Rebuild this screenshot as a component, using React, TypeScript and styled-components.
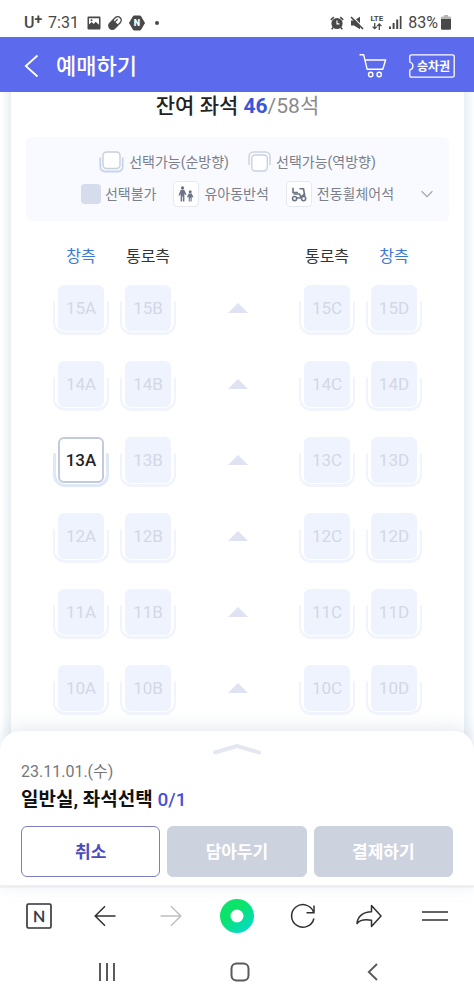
import React from 'react';
import styled, { createGlobalStyle } from 'styled-components';

const GlobalStyle = createGlobalStyle`
  *, *::before, *::after { box-sizing: border-box; }
  body {
    margin: 0;
    background: #fff;
    color: #222;
    font-family: Roboto, "Noto Sans CJK KR", sans-serif;
  }
  button { font-family: inherit; }
  svg { display: block; flex: none; }
  h1, h2, p { margin: 0; }
`;

const Screen = styled.div`
  display: flex;
  flex-direction: column;
  min-height: 100vh;
`;

const IconButton = styled.button<{ $size?: number }>`
  display: flex;
  align-items: center;
  justify-content: center;
  width: ${p => (p.$size ? `${p.$size}px` : 'auto')};
  height: ${p => (p.$size ? `${p.$size}px` : 'auto')};
  padding: 0;
  border: 0;
  background: none;
  color: inherit;
`;

/* ---------- status bar ---------- */

const StatusBar = styled.div`
  display: flex;
  align-items: center;
  justify-content: space-between;
  height: 37px;
  padding: 8px 23px 0 24px;
  color: #484848;
  font-size: 16px;
  line-height: 20px;
`;

const StatusGroup = styled.div`
  display: flex;
  align-items: center;
  gap: 6px;
`;

const Carrier = styled.span`
  display: flex;
  font-weight: 500;
`;

const CarrierPlus = styled.span`
  font-size: 14px;
  line-height: 12px;
  font-weight: 700;
`;

const Clock = styled.span`
  margin-right: 2px;
`;

const Dot = styled.span`
  width: 4px;
  height: 4px;
  margin-left: 4px;
  border-radius: 50%;
  background: #484848;
`;

const Lte = styled.span`
  display: flex;
  flex-direction: column;
  align-items: center;
  font-size: 8px;
  line-height: 8px;
  font-weight: 700;
`;

const BatteryLevel = styled.span`
  display: flex;
  align-items: center;
  gap: 3px;
`;

/* ---------- app header ---------- */

const Header = styled.header`
  display: flex;
  align-items: center;
  height: 55px;
  padding: 3px 19px 0 24px;
  background: #5c6bed;
  color: #fff;
`;

const HeaderTitle = styled.h1`
  flex: 1;
  margin-left: 17px;
  padding-top: 2px;
  font-size: 22px;
  line-height: 30px;
  font-weight: 500;
`;

const TicketButton = styled.button`
  display: grid;
  place-items: center;
  margin-left: 22px;
  padding: 0;
  border: 0;
  background: none;
  color: #fff;
  font-size: 12px;
  line-height: 16px;
  font-weight: 700;

  > * { grid-area: 1 / 1; }
  span { padding: 2px 0 0 3px; }
`;

/* ---------- seat area ---------- */

const Backdrop = styled.main`
  flex: 1;
  display: flex;
  padding: 0 10px 0 11px;
  background:
    linear-gradient(to right, #fff 1px, #e9eff2 11px, transparent 11px) left / 11px 100% no-repeat,
    linear-gradient(to left, #fafcfe 1px, #eaf1f6 9px) right / 10px 100% no-repeat;
`;

const Car = styled.section`
  flex: 1;
  padding: 1px 15px 36px;
  background: #fff;
`;

const Remaining = styled.h2`
  color: #8a8a8e;
  font-size: 21px;
  line-height: 26px;
  font-weight: 400;
  text-align: center;

  b { color: #222; font-weight: 500; }
  strong { color: #3a55d9; font-weight: 700; }
`;

const Legend = styled.div`
  display: grid;
  grid-template-columns: 1fr auto 1fr;
  row-gap: 6px;
  margin-top: 18px;
  padding: 12px 16px 14px;
  border-radius: 6px;
  background: #f8faff;
`;

const LegendRow = styled.div<{ $gap: number }>`
  grid-column: 2;
  display: flex;
  justify-content: center;
  gap: ${p => p.$gap}px;
`;

const LegendItem = styled.span<{ $gap: number }>`
  display: flex;
  align-items: center;
  gap: ${p => p.$gap}px;
  height: 26px;
  color: #7b7f8a;
  font-size: 14px;
  line-height: 20px;
  white-space: nowrap;
`;

const Swatch = styled.span`
  width: 20px;
  height: 20px;
  border-radius: 4px;
  background: #d5dceb;
`;

const SpecialBox = styled.span`
  display: grid;
  place-items: center;
  width: 26px;
  height: 26px;
  border: 1px solid #e6e9f2;
  border-radius: 4px;
  background: #fff;
`;

const LegendToggle = styled(IconButton)`
  justify-self: end;
`;

const SeatGrid = styled.div`
  display: grid;
  grid-template-columns: 56px 56px 1fr 56px 56px;
  column-gap: 11px;
  row-gap: 26px;
  padding: 0 27px;
`;

const ColumnLabels = styled(SeatGrid)`
  margin: 24px 0 16px;
`;

const ColumnLabel = styled.span<{ $window?: boolean }>`
  color: ${p => (p.$window ? '#3a78d8' : '#333')};
  font-size: 16px;
  line-height: 24px;
  text-align: center;
  white-space: nowrap;
`;

const SeatButton = styled.button`
  display: grid;
  justify-items: center;
  width: 56px;
  height: 50px;
  padding: 0;
  border: 0;
  background: none;
  color: #242424;
  font-size: 17px;
  font-weight: 500;

  &::before {
    content: "";
    grid-area: 1 / 1;
    align-self: end;
    width: 56px;
    height: 34px;
    border: 3px solid #dfe8f7;
    border-top: 0;
    border-radius: 2px 2px 12px 12px;
  }

  &:disabled { color: #d3d7e6; font-weight: 400; }
  &:disabled::before { border-width: 0 2px 3px; border-color: #f1f4fc; }
`;

const Cushion = styled.span`
  grid-area: 1 / 1;
  width: 46px;
  height: 46px;
  border: 2px solid #c3cade;
  border-radius: 6px;
  background: #fff;
  line-height: 42px;

  ${SeatButton}:disabled & {
    border-color: #eff3fe;
    background: #eff3fe;
  }
`;

const Direction = styled.svg`
  justify-self: center;
  margin-top: 18px;
`;

/* ---------- booking sheet ---------- */

const Sheet = styled.section`
  position: relative;
  margin-top: -20px;
  padding: 11px 21px 8px;
  border-radius: 20px 20px 0 0;
  background: #fff;
  box-shadow: 0 -2px 18px rgba(150, 168, 200, 0.28);
`;

const SheetHandle = styled(IconButton)`
  margin: 0 auto;
`;

const TripDate = styled.p`
  margin-top: 4px;
  color: #77777b;
  font-size: 16px;
  line-height: 24px;
`;

const TripSummary = styled.p`
  margin: 2px 0 12px;
  color: #111;
  font-size: 19px;
  line-height: 28px;
  font-weight: 700;

  strong { color: #4b4fd6; font-weight: 500; }
`;

const Actions = styled.div`
  display: grid;
  grid-template-columns: repeat(3, 1fr);
  gap: 7px;
`;

const ActionButton = styled.button<{ $outline?: boolean }>`
  height: 51px;
  padding: 0 0 2px;
  border: 1px solid ${p => (p.$outline ? '#7d7ec4' : '#cdd2df')};
  border-radius: 6px;
  background: ${p => (p.$outline ? '#fff' : '#cdd2df')};
  color: ${p => (p.$outline ? '#4a4bbd' : '#fff')};
  font-size: 17px;
  font-weight: 700;
`;

/* ---------- browser and system bars ---------- */

const BrowserBar = styled.nav`
  display: flex;
  align-items: center;
  justify-content: space-between;
  height: 59px;
  padding: 0 22px;
  border-top: 3px solid #f6f6f6;
  background: #fff;
  color: #303035;
`;

const SystemBar = styled.nav`
  display: flex;
  align-items: center;
  justify-content: space-between;
  height: 56px;
  padding: 0 85px 0 90px;
  background: #fff;
  color: #5a5a5a;
`;

/* ---------- icons ---------- */

const PictureIcon = () => (
  <svg width="14" height="14" viewBox="0 0 14 14">
    <path fillRule="evenodd" fill="currentColor" d="M1.5 .5h11a1 1 0 0 1 1 1v11a1 1 0 0 1-1 1h-11a1 1 0 0 1-1-1v-11a1 1 0 0 1 1-1zM2 2.200v6.300l2.600-2.500 2.200 2 1.800-2.200 3.400 3V2.200z" />
    <circle cx="4.500" cy="4.200" r="1" fill="currentColor" />
  </svg>
);

const PillIcon = () => (
  <svg width="16" height="16" viewBox="0 0 16 16">
    <g transform="rotate(-45 8 8)">
      <rect x="0" y="3.800" width="16" height="8.400" rx="4.200" fill="currentColor" />
      <path d="M9 5.200h2.800a2.800 2.800 0 0 1 0 5.600H9z" fill="#fff" />
      <path d="M9 7.200h3.600" stroke="currentColor" strokeWidth="1.200" />
    </g>
  </svg>
);

const HexIcon = () => (
  <svg width="16" height="16" viewBox="0 0 16 16">
    <path d="M4.600 1h6.800L15.500 8l-4.100 7H4.600L.5 8z" fill="currentColor" stroke="currentColor" strokeLinejoin="round" />
    <text x="8" y="11.200" fontSize="9" fontWeight="900" fontFamily="Roboto, sans-serif" fill="#fff" textAnchor="middle">N</text>
  </svg>
);

const AlarmIcon = () => (
  <svg width="14" height="14" viewBox="0 0 14 14" fill="none" stroke="currentColor">
    <circle cx="7" cy="7.500" r="5.600" fill="currentColor" stroke="none" />
    <path d="M.8 3.800 3.800 1.200M10.200 1.200l3 2.600M3 11.500l-1.200 1.700M11 11.500l1.200 1.700" strokeWidth="1.600" />
    <path d="M7 4.500v3.300h2.500" stroke="#fff" strokeWidth="1.200" />
  </svg>
);

const MuteIcon = () => (
  <svg width="14" height="14" viewBox="0 0 14 14">
    <path d="M1 4.500h3L10 .8v12.400L4 9.500H1z" fill="currentColor" />
    <path d="M2.500.5l11 11.500" stroke="#fff" strokeWidth="1.200" />
    <path d="M1 1l12 12" stroke="currentColor" strokeWidth="1.700" />
  </svg>
);

const SignalIcon = () => (
  <svg width="13" height="13" viewBox="0 0 13 13" fill="currentColor">
    <path d="M0 10.500h2V13H0zM3.600 7h2v6h-2zM7.200 3.500h2V13h-2zM10.800 0h1.700v13h-1.700z" />
  </svg>
);

const BatteryIcon = () => (
  <svg width="10" height="15" viewBox="0 0 10 15">
    <path d="M3 0h4v1.500h2a1 1 0 0 1 1 1V5H0V2.500a1 1 0 0 1 1-1h2z" fill="#b5b5b5" />
    <path d="M0 4h10v9.500a1.300 1.300 0 0 1-1.300 1.300H1.300A1.300 1.300 0 0 1 0 13.500z" fill="currentColor" />
  </svg>
);

const BackIcon = () => (
  <svg width="15" height="24" viewBox="0 0 15 24" fill="none" stroke="currentColor" strokeWidth="1.800">
    <path d="M13.500 1.500 1.800 12l11.700 10.500" />
  </svg>
);

const CartIcon = () => (
  <svg width="28" height="26" viewBox="0 0 28 26" fill="none" stroke="currentColor" strokeWidth="1.400" strokeLinejoin="round">
    <path d="M.5 1.800h4.200l3.400 14.400h15.700L26.600 7H6" />
    <circle cx="11.700" cy="21.500" r="2.200" />
    <circle cx="20.200" cy="21.500" r="2.200" />
  </svg>
);

const TicketOutline = () => (
  <svg width="46" height="24" viewBox="0 0 46 24" fill="none" stroke="currentColor" strokeWidth="1.300">
    <path d="M2.500.8h41a1.700 1.700 0 0 1 1.700 1.700v19a1.700 1.700 0 0 1-1.700 1.700h-41A1.700 1.700 0 0 1 .8 21.500V16c4.200-1.200 4.200-6.800 0-8V2.500A1.700 1.700 0 0 1 2.500.8z" />
  </svg>
);

const ForwardSeatIcon = () => (
  <svg width="25" height="22" viewBox="0 0 25 22" fill="none">
    <path d="M1.300 6.500V16a4.500 4.500 0 0 0 4.500 4.500h13.400a4.500 4.500 0 0 0 4.500-4.500V6.500" stroke="#c5d5ee" strokeWidth="1.800" />
    <rect x="4" y="1" width="17" height="16.500" rx="3.500" fill="#fff" stroke="#c9cedb" strokeWidth="1.400" />
  </svg>
);

const BackwardSeatIcon = () => (
  <svg width="23" height="22" viewBox="0 0 23 22" fill="none">
    <path d="M1 14V5.500A4.500 4.500 0 0 1 5.500 1h12A4.500 4.500 0 0 1 22 5.500V14" stroke="#cdd4e2" strokeWidth="1.500" />
    <rect x="3.800" y="4" width="15.500" height="16" rx="3.500" fill="#fff" stroke="#c9d0e2" strokeWidth="1.400" />
  </svg>
);

const FamilyIcon = () => (
  <svg width="16" height="16" viewBox="0 0 16 16" fill="#6c7288">
    <circle cx="4.500" cy="2" r="1.700" />
    <path d="M2.600 4h3.800L8.400 8.600l-1 .5L6.400 7.500V15.500H4.900V10.500h-.8v5H2.600V7.500L1.600 9.700.5 9.200z" />
    <circle cx="12.200" cy="5.800" r="1.500" />
    <path d="M10.800 7.600h2.800L15.500 11l-.9.600-.9-1.200v5.100h-1.100v-3.200h-.8v3.200h-1.100v-5.100l-.9 1.200L8.900 11z" />
  </svg>
);

const ScooterIcon = () => (
  <svg width="16" height="15" viewBox="0 0 16 15" fill="none" stroke="#6c7288">
    <path d="M2 .8v4.700h5M8.500 1.800h4l1.300 7.200" strokeWidth="1.600" />
    <path d="M2.500 7h6l1.300 3 3.500-2.500" strokeWidth="1.600" />
    <circle cx="3.600" cy="11.600" r="2.100" strokeWidth="1.500" />
    <circle cx="12.600" cy="11.600" r="2.100" strokeWidth="1.500" />
    <path d="M5.500 11h5" strokeWidth="1.500" />
  </svg>
);

const ChevronDownIcon = () => (
  <svg width="12" height="8" viewBox="0 0 12 8" fill="none" stroke="#a3a8b3" strokeWidth="1.300">
    <path d="M.6 1.200 6 6.600l5.400-5.400" />
  </svg>
);

const HandleIcon = () => (
  <svg width="50" height="14" viewBox="0 0 50 14" fill="none" stroke="#e3e7f1" strokeWidth="4" strokeLinecap="round" strokeLinejoin="round">
    <path d="M3 10.500 25 4l22 6.500" />
  </svg>
);

const NaverIcon = () => (
  <svg width="26" height="26" viewBox="0 0 26 26">
    <rect x="1" y="1" width="24" height="24" rx="1.500" fill="none" stroke="currentColor" strokeWidth="1.600" />
    <text x="13" y="18.500" fontSize="16" fontWeight="400" fontFamily="Lato, sans-serif" fill="currentColor" stroke="currentColor" strokeWidth="0.400" textAnchor="middle">N</text>
  </svg>
);

const ArrowIcon = ({ flip = false }: { flip?: boolean }) => (
  <svg width="22" height="22" viewBox="0 0 22 22" fill="none" stroke={flip ? '#c0c0c0' : 'currentColor'} strokeWidth="1.500">
    <path d={flip ? 'M.5 11h20M11 1.200l9.800 9.800-9.800 9.800' : 'M21.500 11h-20M11 1.200 1.200 11l9.800 9.800'} />
  </svg>
);

const GreenDotIcon = () => (
  <svg width="34" height="34" viewBox="0 0 34 34">
    <defs>
      <linearGradient id="green" x1="0.200" y1="0.100" x2="0.800" y2="0.900">
        <stop offset="0.350" stopColor="#0be36a" />
        <stop offset="1" stopColor="#04dcc4" />
      </linearGradient>
    </defs>
    <circle cx="17" cy="17" r="17" fill="url(#green)" />
    <circle cx="17" cy="17" r="6.500" fill="#fff" />
  </svg>
);

const ReloadIcon = () => (
  <svg width="26" height="26" viewBox="0 0 26 26" fill="none" stroke="currentColor" strokeWidth="1.500">
    <path d="M24 2.500V9.800H16.500M23.600 9.300A11.300 11.300 0 1 0 23.900 15.500" />
  </svg>
);

const ShareIcon = () => (
  <svg width="26" height="24" viewBox="0 0 26 24" fill="none" stroke="currentColor" strokeWidth="1.500" strokeLinejoin="round">
    <path d="M15.500 1.500 25 12l-9.500 10.500V16.300C9 15.200 4 15.800 1 19.500 1.500 12.500 7 8 15.500 7.800z" />
  </svg>
);

const MenuIcon = () => (
  <svg width="26" height="12" viewBox="0 0 26 12" stroke="currentColor" strokeWidth="1.600">
    <path d="M0 2h26M0 10h26" />
  </svg>
);

const RecentsIcon = () => (
  <svg width="18" height="18" viewBox="0 0 18 18" stroke="currentColor" strokeWidth="2">
    <path d="M2 0v18M9 0v18M16 0v18" />
  </svg>
);

const HomeIcon = () => (
  <svg width="20" height="20" viewBox="0 0 20 20" fill="none" stroke="currentColor" strokeWidth="2">
    <rect x="1.500" y="1.500" width="17" height="17" rx="5" />
  </svg>
);

const SystemBackIcon = () => (
  <svg width="11" height="18" viewBox="0 0 11 18" fill="none" stroke="currentColor" strokeWidth="1.900">
    <path d="M10 1 1.800 9l8.200 8" />
  </svg>
);

/* ---------- page ---------- */

const ROWS = [15, 14, 13, 12, 11, 10];
const AVAILABLE = new Set(['13A']);

const Seat = ({ id }: { id: string }) => (
  <SeatButton type="button" disabled={!AVAILABLE.has(id)}>
    <Cushion>{id}</Cushion>
  </SeatButton>
);

export default function App() {
  return (
    <Screen>
      <GlobalStyle />
      <StatusBar>
        <StatusGroup>
          <Carrier>U<CarrierPlus>+</CarrierPlus></Carrier>
          <Clock>7:31</Clock>
          <PictureIcon />
          <PillIcon />
          <HexIcon />
          <Dot />
        </StatusGroup>
        <StatusGroup>
          <AlarmIcon />
          <MuteIcon />
          <Lte>
            LTE
            <svg width="10" height="7" viewBox="0 0 10 7" fill="none" stroke="currentColor" strokeWidth="1.300">
              <path d="M2.700 0v5.500M.6 3.600l2.100 2.100 2.100-2.100M7.300 7V1.200M5.200 3.100 7.300 1l2.100 2.100" />
            </svg>
          </Lte>
          <SignalIcon />
          <BatteryLevel>83%<BatteryIcon /></BatteryLevel>
        </StatusGroup>
      </StatusBar>

      <Header>
        <IconButton type="button" aria-label="뒤로"><BackIcon /></IconButton>
        <HeaderTitle>예매하기</HeaderTitle>
        <IconButton type="button" aria-label="장바구니"><CartIcon /></IconButton>
        <TicketButton type="button">
          <TicketOutline />
          <span>승차권</span>
        </TicketButton>
      </Header>

      <Backdrop>
        <Car>
          <Remaining><b>잔여 좌석</b> <strong>46</strong>/58석</Remaining>

          <Legend>
            <LegendRow $gap={19}>
              <LegendItem $gap={5}><ForwardSeatIcon />선택가능(순방향)</LegendItem>
              <LegendItem $gap={5}><BackwardSeatIcon />선택가능(역방향)</LegendItem>
            </LegendRow>
            <LegendRow $gap={17}>
              <LegendItem $gap={4}><Swatch />선택불가</LegendItem>
              <LegendItem $gap={5}><SpecialBox><FamilyIcon /></SpecialBox>유아동반석</LegendItem>
              <LegendItem $gap={5}><SpecialBox><ScooterIcon /></SpecialBox>전동휠체어석</LegendItem>
            </LegendRow>
            <LegendToggle type="button" aria-label="범례 펼치기"><ChevronDownIcon /></LegendToggle>
          </Legend>

          <ColumnLabels>
            <ColumnLabel $window>창측</ColumnLabel>
            <ColumnLabel>통로측</ColumnLabel>
            <span />
            <ColumnLabel>통로측</ColumnLabel>
            <ColumnLabel $window>창측</ColumnLabel>
          </ColumnLabels>

          <SeatGrid>
            {ROWS.map(row => (
              <React.Fragment key={row}>
                <Seat id={`${row}A`} />
                <Seat id={`${row}B`} />
                <Direction width="20" height="10" viewBox="0 0 20 10">
                  <path d="M10 0 20 10H0z" fill="#dfe2f0" />
                </Direction>
                <Seat id={`${row}C`} />
                <Seat id={`${row}D`} />
              </React.Fragment>
            ))}
          </SeatGrid>
        </Car>
      </Backdrop>

      <Sheet>
        <SheetHandle type="button" aria-label="펼치기"><HandleIcon /></SheetHandle>
        <TripDate>23.11.01.(수)</TripDate>
        <TripSummary>일반실, 좌석선택 <strong>0/1</strong></TripSummary>
        <Actions>
          <ActionButton type="button" $outline>취소</ActionButton>
          <ActionButton type="button" disabled>담아두기</ActionButton>
          <ActionButton type="button" disabled>결제하기</ActionButton>
        </Actions>
      </Sheet>

      <BrowserBar>
        <IconButton type="button" $size={34} aria-label="네이버 홈"><NaverIcon /></IconButton>
        <IconButton type="button" $size={34} aria-label="이전"><ArrowIcon /></IconButton>
        <IconButton type="button" $size={34} aria-label="다음" disabled><ArrowIcon flip /></IconButton>
        <IconButton type="button" $size={34} aria-label="그린닷"><GreenDotIcon /></IconButton>
        <IconButton type="button" $size={34} aria-label="새로고침"><ReloadIcon /></IconButton>
        <IconButton type="button" $size={34} aria-label="공유"><ShareIcon /></IconButton>
        <IconButton type="button" $size={34} aria-label="메뉴"><MenuIcon /></IconButton>
      </BrowserBar>

      <SystemBar>
        <IconButton type="button" $size={34} aria-label="최근 앱"><RecentsIcon /></IconButton>
        <IconButton type="button" $size={34} aria-label="홈"><HomeIcon /></IconButton>
        <IconButton type="button" $size={34} aria-label="뒤로 가기"><SystemBackIcon /></IconButton>
      </SystemBar>
    </Screen>
  );
}
